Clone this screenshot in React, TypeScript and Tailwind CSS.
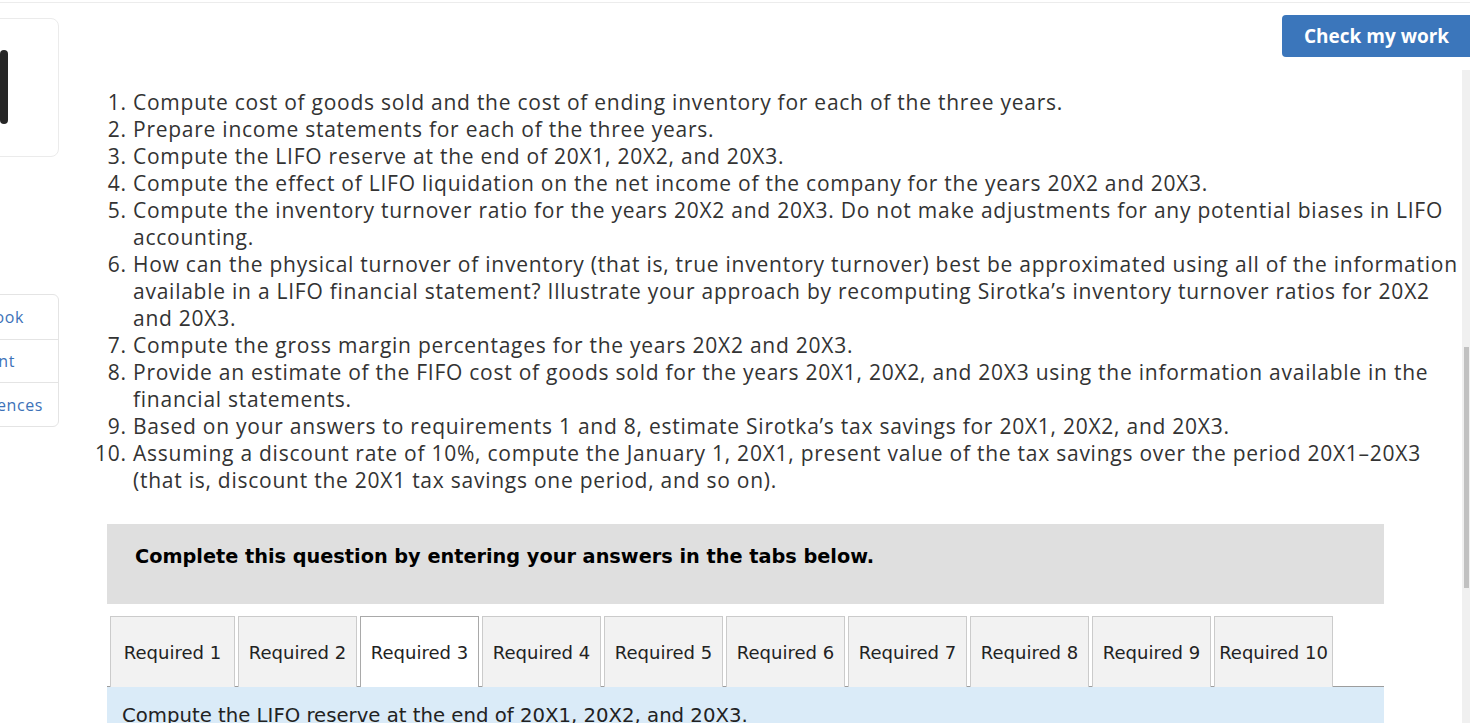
import React from "react";

const items: string[] = [
  "Compute cost of goods sold and the cost of ending inventory for each of the three years.",
  "Prepare income statements for each of the three years.",
  "Compute the LIFO reserve at the end of 20X1, 20X2, and 20X3.",
  "Compute the effect of LIFO liquidation on the net income of the company for the years 20X2 and 20X3.",
  "Compute the inventory turnover ratio for the years 20X2 and 20X3. Do not make adjustments for any potential biases in LIFO accounting.",
  "How can the physical turnover of inventory (that is, true inventory turnover) best be approximated using all of the information available in a LIFO financial statement? Illustrate your approach by recomputing Sirotka’s inventory turnover ratios for 20X2 and 20X3.",
  "Compute the gross margin percentages for the years 20X2 and 20X3.",
  "Provide an estimate of the FIFO cost of goods sold for the years 20X1, 20X2, and 20X3 using the information available in the financial statements.",
  "Based on your answers to requirements 1 and 8, estimate Sirotka’s tax savings for 20X1, 20X2, and 20X3.",
  "Assuming a discount rate of 10%, compute the January 1, 20X1, present value of the tax savings over the period 20X1–20X3 (that is, discount the 20X1 tax savings one period, and so on).",
];

const tabs = Array.from({ length: 10 }, (_, i) => `Required ${i + 1}`);

export default function App() {
  return (
    <div className="w-[1470px] h-[723px] overflow-hidden bg-white font-['Open_Sans',sans-serif]">
      <div className="h-[3px] border-b border-[#ececec]" />
      <div className="flex">
        {/* left rail, partly off screen */}
        <div className="w-[59px] shrink-0 overflow-hidden">
          <div className="mt-[15px] ml-[-20px] w-[79px] h-[139px] rounded-[8px] border border-[#ebebeb] pl-[19px] pt-[31px]">
            <div className="w-[8px] h-[74px] rounded-[4px] bg-[#262626]" />
          </div>
          <div className="mt-[137px] ml-[-73px] w-[132px] rounded-[6px] border border-[#e4e4e4] text-[16px] tracking-[0.6px] text-[#3d72b8]">
            <div className="h-[45px] flex items-center justify-end pr-[34px] border-b border-[#e4e4e4]">eBook</div>
            <div className="h-[43px] flex items-center justify-end pr-[43px] border-b border-[#e4e4e4]">Print</div>
            <div className="h-[43px] flex items-center justify-end pr-[15px]">References</div>
          </div>
        </div>

        <div className="flex-1 flex flex-col">
          <div className="h-[67px] flex justify-end items-start">
            <button className="mt-[12px] h-[42px] w-[188px] rounded-l-[4px] bg-[#3b76bb] pl-[22px] text-left text-[19px] font-bold text-white">
              Check my work
            </button>
          </div>
          <div className="flex">
            <div className="flex-1 pt-[19px]">
              <ol className="list-decimal pl-[74px] text-[21px] tracking-[0.75px] leading-[27px] text-[#333]">
                {items.map((t, i) => (
                  <li key={i}>{t}</li>
                ))}
              </ol>

              <div className="ml-[48px] w-[1277px] mt-[30px]">
                <div className="h-[80px] bg-[#dfdfdf] pl-[28px] pt-[19px] font-['DejaVu_Sans',sans-serif] text-[19.3px] font-bold text-black">
                  Complete this question by entering your answers in the tabs below.
                </div>
                <div className="mt-[12px] flex gap-[3px] pl-[3px] font-['DejaVu_Sans',sans-serif] text-[18px] text-[#222]">
                  {tabs.map((t, i) => (
                    <div
                      key={t}
                      className={`h-[71px] flex items-center justify-center border border-b-0 ${i === 0 ? "w-[125px]" : "w-[119px]"} ${
                        i === 2 ? "bg-white border-[#a9a9a9] relative z-10" : "bg-[#f2f2f2] border-[#cbcbcb]"
                      }`}
                    >
                      {t}
                    </div>
                  ))}
                </div>
                <div className="-mt-px h-[80px] border-t border-[#9d9d9d] bg-[#daebf8] pl-[15px] pt-[14px] font-['DejaVu_Sans',sans-serif] text-[19.7px] text-[#222]">
                  Compute the LIFO reserve at the end of 20X1, 20X2, and 20X3.
                </div>
              </div>
            </div>
            <div className="w-[8px] shrink-0 bg-[#f0f0f0] h-[656px] pt-[277px] pl-[2px]">
              <div className="w-[5px] h-[241px] bg-[#c1c1c1]" />
            </div>
          </div>
        </div>
      </div>
    </div>
  );
}
